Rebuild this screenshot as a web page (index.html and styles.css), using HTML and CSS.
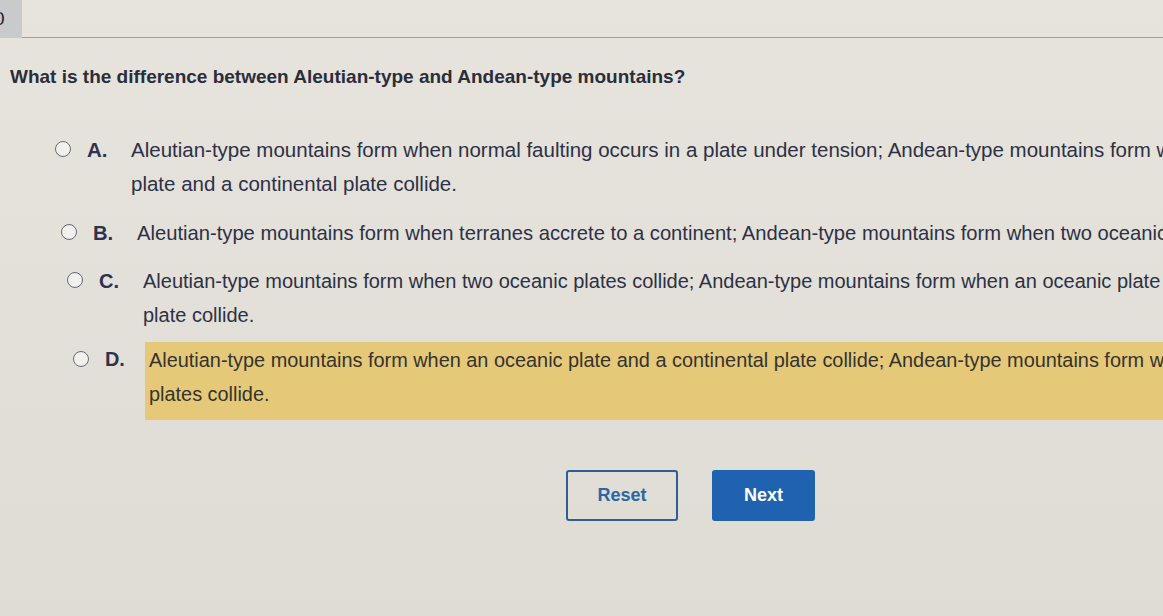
FILE: index.html
```html
<!DOCTYPE html>
<html lang="en">
<head>
  <meta charset="UTF-8">
  <title>Question</title>
  <link rel="stylesheet" href="styles.css">
</head>
<body>
  <div class="page">
    <!-- top bar -->
    <div class="topbar">
      <div class="tab">0</div>
      <div class="rule"></div>
    </div>

    <h1 class="question">What is the difference between Aleutian-type and Andean-type mountains?</h1>

    <ul class="choices">
      <li class="choice">
        <span class="radio"></span>
        <span class="letter">A.</span>
        <span class="text">Aleutian-type mountains form when normal faulting occurs in a plate under tension; Andean-type mountains form when an oceanic<br>plate and a continental plate collide.</span>
      </li>
      <li class="choice">
        <span class="radio"></span>
        <span class="letter">B.</span>
        <span class="text">Aleutian-type mountains form when terranes accrete to a continent; Andean-type mountains form when two oceanic plates collide.</span>
      </li>
      <li class="choice">
        <span class="radio"></span>
        <span class="letter">C.</span>
        <span class="text">Aleutian-type mountains form when two oceanic plates collide; Andean-type mountains form when an oceanic plate and a continental<br>plate collide.</span>
      </li>
      <li class="choice selected">
        <span class="radio"></span>
        <span class="letter">D.</span>
        <span class="text">Aleutian-type mountains form when an oceanic plate and a continental plate collide; Andean-type mountains form when two oceanic<br>plates collide.</span>
      </li>
    </ul>

    <div class="actions">
      <button class="btn reset">Reset</button>
      <button class="btn next">Next</button>
    </div>
  </div>
</body>
</html>
```

FILE: styles.css
```css
/* General */
html, body {
  margin: 0;
  height: 100%;
  overflow: hidden;
}

body {
  font-family: 'Liberation Sans', Arial, sans-serif;
  background: linear-gradient(to bottom, #e6e4dd, #dedcd3);
  color: #2d3046;
}

.page {
  width: 1600px;
}

/* Top bar */
.topbar {
  display: flex;
  align-items: flex-end;
  height: 38px;
}

.topbar .tab {
  width: 22px;
  height: 38px;
  background: #c9cacb;
  color: #1e2230;
  font-size: 19px;
  line-height: 38px;
  text-indent: -6px;
  overflow: hidden;
}

.topbar .rule {
  flex: 1;
  height: 1px;
  background: #9ba0a6;
}

/* Question */
.question {
  margin: 27px 0 0 10px;
  font-size: 19px;
  font-weight: bold;
  color: #2b2d3a;
  line-height: 24px;
}

/* Choices */
.choices {
  list-style: none;
  margin: 44px 0 0 0;
  padding: 0;
}

.choice {
  display: flex;
  align-items: flex-start;
  font-size: 20.5px;
  line-height: 34px;
}

.choice:nth-child(1) { padding-left: 55px; }
.choice:nth-child(2) { padding-left: 61px; margin-top: 15px; font-size: 20.2px; }
.choice:nth-child(3) { padding-left: 67px; margin-top: 14px; font-size: 20px; }
.choice:nth-child(4) { padding-left: 73px; margin-top: 10px; font-size: 19.9px; }

.choice .radio {
  flex: none;
  width: 14px;
  height: 14px;
  border: 1.5px solid #676b78;
  border-radius: 50%;
  background: #f2f1ed;
  margin-top: 8px;
}

.choice .letter {
  flex: none;
  width: 44px;
  margin-left: 16px;
  font-weight: bold;
  color: #2e3250;
}

.choice .text {
  flex: 1;
  color: #2d3046;
}

.choice.selected .radio {
  margin-top: 9px;
}

.choice.selected .text {
  background: #e5c978;
  margin-left: -4px;
  padding: 1px 0 9px 4px;
  color: #34332e;
}

/* Buttons */
.actions {
  display: flex;
  gap: 34px;
  padding-left: 566px;
  margin-top: 50px;
}

.btn {
  font-family: 'Liberation Sans', Arial, sans-serif;
  font-size: 18px;
  font-weight: bold;
  border-radius: 3px;
  cursor: pointer;
  height: 51px;
}

.btn.reset {
  width: 112px;
  background: transparent;
  border: 2px solid #2d5e98;
  color: #2c66a6;
}

.btn.next {
  width: 103px;
  background: #1f63b0;
  border: none;
  color: #fff;
}
```
